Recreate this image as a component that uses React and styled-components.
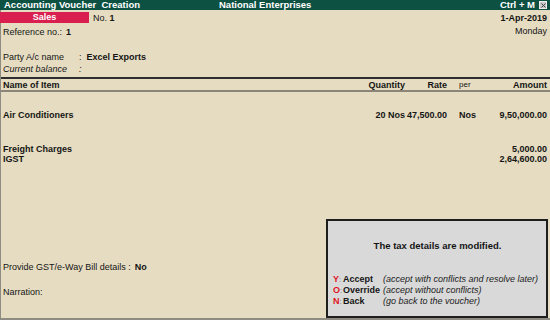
import React from "react";
import styled, { createGlobalStyle } from "styled-components";

const Global = createGlobalStyle`
  html, body { margin: 0; padding: 0; background: #e5dcc1; }
  body { font-family: "Liberation Sans", Arial, sans-serif; }
`;

const Page = styled.div`
  position: relative;
  width: 550px;
  height: 320px;
  background: #e5dcc1;
  color: #151515;
  font-size: 9px;
  display: flex;
  flex-direction: column;
  overflow: hidden;
`;

const TitleBar = styled.div`
  height: 10px;
  background: #0d5143;
  color: #fff;
  font-weight: bold;
  font-size: 9.5px;
  line-height: 10px;
  display: grid;
  grid-template-columns: 215px auto 1fr;
  align-items: center;
  padding: 0 3px 0 4px;
  white-space: nowrap;
`;

const TitleRight = styled.div`
  display: flex;
  justify-content: flex-end;
  align-items: center;
  gap: 4px;
`;

const CloseBox = styled.span`
  width: 8px;
  height: 8px;
  background: #c9c9c9;
  border: 1px solid #eee;
  box-sizing: border-box;
  display: flex;
  align-items: center;
  justify-content: center;
`;

const Main = styled.div`
  flex: 1;
  display: flex;
  flex-direction: column;
  border-left: 1px solid #8e8b83;
  border-bottom: 2px solid #8e8b83;
`;

const Header = styled.div`
  height: 67px;
  box-sizing: border-box;
  display: flex;
  justify-content: space-between;
`;

const LeftCol = styled.div`
  display: flex;
  flex-direction: column;
  padding-top: 2px;
`;

const RightCol = styled.div`
  display: flex;
  flex-direction: column;
  align-items: flex-end;
  padding: 3px 3px 0 0;
  gap: 3px;
`;

const Line = styled.div`
  height: 10px;
  line-height: 10px;
  white-space: nowrap;
  margin-top: ${(p) => p.$mt || 0}px;
  font-weight: ${(p) => (p.$bold ? "bold" : "normal")};
  font-style: ${(p) => (p.$italic ? "italic" : "normal")};
  padding-left: ${(p) => (p.$pl ?? 2)}px;
  display: flex;
  align-items: center;
`;

const SalesRow = styled.div`
  height: 11px;
  display: flex;
  align-items: center;
  margin-left: -1px;
`;

const SalesBadge = styled.div`
  width: 89px;
  height: 11px;
  background: #d91f50;
  color: #fff;
  font-weight: bold;
  text-align: center;
  line-height: 11px;
`;

const VNo = styled.span`
  margin-left: 4px;
`;

const Bold = styled.b`
  font-weight: bold;
  margin-left: ${(p) => p.$ml || 0}px;
`;

const Label = styled.span`
  display: inline-block;
  width: ${(p) => p.$w}px;
`;

const TableHead = styled.div`
  border-top: 2px solid #2f2f2f;
  border-bottom: 2px solid #8a8578;
  height: 10px;
  line-height: 10px;
  font-weight: bold;
  display: grid;
  grid-template-columns: 1fr 45px 42px 38px 62px;
  padding: 1px 3px 0 2px;
`;

const ItemRow = styled.div`
  display: grid;
  grid-template-columns: 1fr 45px 42px 38px 62px;
  height: 10px;
  line-height: 10px;
  font-weight: bold;
  padding: 0 3px 0 2px;
  margin-top: ${(p) => p.$mt || 0}px;
  white-space: nowrap;
`;

const Cell = styled.div`
  text-align: ${(p) => p.$align || "left"};
  padding-left: ${(p) => p.$pl || 0}px;
  font-weight: ${(p) => (p.$normal ? "normal" : "bold")};
  font-size: ${(p) => p.$size || 9}px;
`;

const Spacer = styled.div`
  flex: 1;
`;

const Footer = styled.div`
  display: flex;
  flex-direction: column;
  gap: 15px;
  padding-bottom: 21px;
`;

const Popup = styled.div`
  position: absolute;
  left: 326px;
  top: 219px;
  width: 222px;
  height: 99px;
  box-sizing: border-box;
  background: #d9d9d9;
  border: 2px solid #1e1e1e;
  display: flex;
  flex-direction: column;
  padding: 20px 4px 0 5px;
`;

const PopupTitle = styled.div`
  text-align: center;
  font-weight: bold;
  font-size: 9.5px;
  height: 10px;
  line-height: 10px;
  margin-bottom: 23px;
`;

const Options = styled.div`
  display: grid;
  grid-template-columns: 10px 40px 1fr;
  grid-auto-rows: 11px;
  line-height: 11px;
  white-space: nowrap;
`;

const Key = styled.span`
  color: #e0141e;
  font-weight: bold;
`;

const Colon = styled.span`
  color: #666;
  font-weight: normal;
  font-size: 7px;
`;

const OptLabel = styled.span`
  font-weight: bold;
`;

const OptDesc = styled.span`
  font-style: italic;
  color: #222;
`;

const options = [
  ["Y", "Accept", "(accept with conflicts and resolve later)"],
  ["O", "Override", "(accept without conflicts)"],
  ["N", "Back", "(go back to the voucher)"],
];

export default function App() {
  return (
    <>
      <Global />
      <Page>
        <TitleBar>
          <span>Accounting Voucher&nbsp; Creation</span>
          <span>National Enterprises</span>
          <TitleRight>
            <span>Ctrl + M</span>
            <CloseBox>
              <svg width="5" height="5" viewBox="0 0 5 5">
                <path d="M0.5 0.5L4.5 4.5M4.5 0.5L0.5 4.5" stroke="#444" strokeWidth="1" />
              </svg>
            </CloseBox>
          </TitleRight>
        </TitleBar>
        <Main>
          <Header>
            <LeftCol>
              <SalesRow>
                <SalesBadge>Sales</SalesBadge>
                <VNo>
                  No. <Bold>1</Bold>
                </VNo>
              </SalesRow>
              <Line $mt={4}>
                Reference no.: <Bold $ml={4}>1</Bold>
              </Line>
              <Line $mt={15}>
                <Label $w={76}>Party A/c name</Label>: <Bold $ml={5}>Excel Exports</Bold>
              </Line>
              <Line $mt={2} $italic>
                <Label $w={76}>Current balance</Label>:
              </Line>
            </LeftCol>
            <RightCol>
              <Line $bold $pl={0}>1-Apr-2019</Line>
              <Line $pl={0}>Monday</Line>
            </RightCol>
          </Header>
          <TableHead>
            <Cell>Name of Item</Cell>
            <Cell $align="right">Quantity</Cell>
            <Cell $align="right">Rate</Cell>
            <Cell $pl={12} $normal $size={8}>per</Cell>
            <Cell $align="right">Amount</Cell>
          </TableHead>
          <ItemRow $mt={18}>
            <Cell>Air Conditioners</Cell>
            <Cell $align="right">20 Nos</Cell>
            <Cell $align="right">47,500.00</Cell>
            <Cell $pl={12}>Nos</Cell>
            <Cell $align="right">9,50,000.00</Cell>
          </ItemRow>
          <ItemRow $mt={24}>
            <Cell>Freight Charges</Cell>
            <Cell />
            <Cell />
            <Cell />
            <Cell $align="right">5,000.00</Cell>
          </ItemRow>
          <ItemRow>
            <Cell>IGST</Cell>
            <Cell />
            <Cell />
            <Cell />
            <Cell $align="right">2,64,600.00</Cell>
          </ItemRow>
          <Spacer />
          <Footer>
            <Line>
              Provide GST/e-Way Bill details : <Bold $ml={4}>No</Bold>
            </Line>
            <Line>Narration:</Line>
          </Footer>
        </Main>
        <Popup>
          <PopupTitle>The tax details are modified.</PopupTitle>
          <Options>
            {options.map(([k, l, d]) => (
              <React.Fragment key={k}>
                <span>
                  <Key>{k}</Key>
                  <Colon>:</Colon>
                </span>
                <OptLabel>{l}</OptLabel>
                <OptDesc>{d}</OptDesc>
              </React.Fragment>
            ))}
          </Options>
        </Popup>
      </Page>
    </>
  );
}
